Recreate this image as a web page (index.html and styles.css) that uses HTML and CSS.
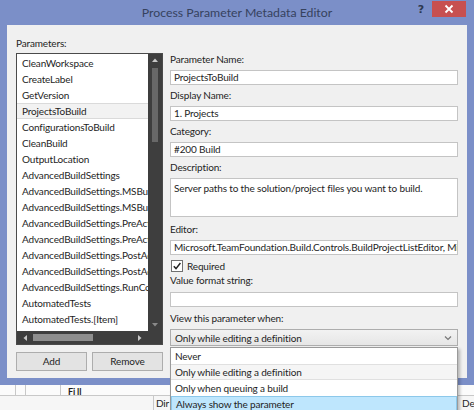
FILE: index.html
```html
<!DOCTYPE html>
<html>
<head>
<meta charset="utf-8">
<link rel="stylesheet" href="styles.css">
</head>
<body>
<div class="dialog">
  <div class="titlebar">
    <div></div>
    <div class="title">Process Parameter Metadata Editor</div>
    <div class="caption-buttons">
      <span class="help">?</span>
      <span class="close"><svg width="10" height="10" viewBox="0 0 10 10"><path d="M1.5 1.5L8.5 8.5M8.5 1.5L1.5 8.5" stroke="#fff" stroke-width="1.8"/></svg></span>
    </div>
  </div>
  <div class="client">
    <div class="left">
      <div class="label">Parameters:</div>
      <div class="listbox">
        <div class="list-main">
          <div class="items">
            <div class="item">CleanWorkspace</div>
            <div class="item">CreateLabel</div>
            <div class="item">GetVersion</div>
            <div class="item selected">ProjectsToBuild</div>
            <div class="item">ConfigurationsToBuild</div>
            <div class="item">CleanBuild</div>
            <div class="item">OutputLocation</div>
            <div class="item">AdvancedBuildSettings</div>
            <div class="item">AdvancedBuildSettings.MSBuildArguments</div>
            <div class="item">AdvancedBuildSettings.MSBuildPlatform</div>
            <div class="item">AdvancedBuildSettings.PreActionScriptPath</div>
            <div class="item">AdvancedBuildSettings.PreActionScriptArguments</div>
            <div class="item">AdvancedBuildSettings.PostActionScriptPath</div>
            <div class="item">AdvancedBuildSettings.PostActionScriptArguments</div>
            <div class="item">AdvancedBuildSettings.RunCodeAnalysis</div>
            <div class="item">AutomatedTests</div>
            <div class="item">AutomatedTests.[Item]</div>
          </div>
          <div class="vscroll">
            <svg class="arrow" width="14" height="12" viewBox="0 0 14 12"><path d="M4 8L7 4.5L10 8Z" fill="#c8c8c8"/></svg>
            <div class="vthumb"></div>
            <div class="vspace"></div>
            <svg class="arrow" width="14" height="12" viewBox="0 0 14 12"><path d="M4 4L7 7.5L10 4Z" fill="#8a8a8a"/></svg>
          </div>
        </div>
        <div class="hrow">
          <div class="hscroll">
            <svg width="12" height="12" viewBox="0 0 12 12"><path d="M8 3L4.5 6L8 9Z" fill="#c8c8c8"/></svg>
            <div class="hthumb"></div>
            <div class="hspace"></div>
            <svg width="12" height="12" viewBox="0 0 12 12"><path d="M4 3L7.5 6L4 9Z" fill="#c8c8c8"/></svg>
          </div>
          <div class="corner"></div>
        </div>
      </div>
      <div class="buttons">
        <div class="btn">Add</div>
        <div class="btn">Remove</div>
      </div>
    </div>
    <div class="right">
      <div class="label">Parameter Name:</div>
      <div class="box">ProjectsToBuild</div>
      <div class="label">Display Name:</div>
      <div class="box">1. Projects</div>
      <div class="label">Category:</div>
      <div class="box">#200 Build</div>
      <div class="label">Description:</div>
      <div class="box area">Server paths to the solution/project files you want to build.</div>
      <div class="label after-area">Editor:</div>
      <div class="box">Microsoft.TeamFoundation.Build.Controls.BuildProjectListEditor, Microsoft.TeamFoundation.Build.Controls</div>
      <div class="check-row">
        <span class="checkbox"><svg width="10" height="10" viewBox="0 0 10 10"><path d="M1.8 5.2L4 7.6L8.4 2" stroke="#222" stroke-width="1.5" fill="none"/></svg></span>
        <span>Required</span>
      </div>
      <div class="label">Value format string:</div>
      <div class="box fmt"></div>
      <div class="label">View this parameter when:</div>
      <div class="combo">
        <span>Only while editing a definition</span>
        <svg width="8" height="6" viewBox="0 0 8 6"><path d="M1 1.5L4 4.5L7 1.5" stroke="#777" stroke-width="1.2" fill="none"/></svg>
      </div>
    </div>
  </div>
</div>
<div class="backdrop">
  <div class="band1">
    <span class="vline l1"></span><span class="vline l2"></span><span class="vline l3"></span>
    <span class="fi">Fi ll</span>
  </div>
  <div class="band2">
    <span class="dir">Dir</span>
    <span class="de">De</span>
  </div>
</div>
<div class="dropdown">
  <div class="opt">Never</div>
  <div class="opt hover">Only while editing a definition</div>
  <div class="opt">Only when queuing a build</div>
  <div class="opt sel">Always show the parameter</div>
</div>
</body>
</html>
```
FILE: styles.css
```css
* { box-sizing: border-box; }
html, body { margin: 0; padding: 0; }
body {
  width: 474px;
  height: 410px;
  overflow: hidden;
  background: #f4f4f4;
  font-family: "Lato", "Open Sans", sans-serif;
  font-size: 10px;
  letter-spacing: -0.15px;
  color: #1e1e1e;
  position: relative;
}
.dialog {
  background: #7b8fc8;
  padding: 0 7px 7px 7px;
}
.titlebar {
  height: 25px;
  display: grid;
  grid-template-columns: 1fr auto 1fr;
  align-items: start;
}
.title {
  font-size: 12.3px;
  letter-spacing: 0;
  color: #36425e;
  line-height: 26px;
}
.caption-buttons {
  display: flex;
  justify-content: flex-end;
  align-items: flex-start;
  margin-right: 1px;
}
.help {
  font-weight: bold;
  color: #2d3850;
  font-size: 11px;
  line-height: 20px;
  margin-right: 8px;
  font-family: "DejaVu Sans", sans-serif;
}
.close {
  width: 34px;
  height: 16px;
  margin-top: 1px;
  background: #c75050;
  display: flex;
  align-items: center;
  justify-content: center;
}
.client {
  background: #f0f0f0;
  height: 353px;
  display: flex;
  padding: 11px 9px 0 9px;
  gap: 7px;
}
.left {
  width: 147px;
  display: flex;
  flex-direction: column;
}
.label {
  line-height: 15px;
  height: 15px;
  white-space: nowrap;
}
.left .label { margin-bottom: 2px; }
.listbox {
  height: 292px;
  border: 1px solid #4a4a4a;
  background: #fff;
  display: flex;
  flex-direction: column;
}
.list-main {
  flex: 1;
  display: flex;
  min-height: 0;
}
.items {
  flex: 1;
  overflow: hidden;
  padding-top: 1px;
}
.item {
  height: 16px;
  line-height: 16px;
  padding-left: 5px;
  white-space: nowrap;
}
.item.selected {
  background: #f2f2f2;
  border-top: 1px solid #dadada;
  border-bottom: 1px solid #dadada;
  line-height: 14px;
}
.vscroll {
  width: 14px;
  background: #3e3e3e;
  display: flex;
  flex-direction: column;
  align-items: center;
}
.arrow { display: block; flex: none; }
.vthumb {
  width: 6px;
  height: 74px;
  margin-top: 2px;
  background: #686868;
}
.vspace { flex: 1; }
.hrow {
  height: 13px;
  display: flex;
}
.hscroll {
  flex: 1;
  background: #3e3e3e;
  display: flex;
  align-items: center;
  padding: 0 2px;
}
.hthumb {
  width: 60px;
  height: 7px;
  margin-left: 2px;
  background: #8e8e8e;
}
.hspace { flex: 1; }
.corner {
  width: 14px;
  background: #3e3e3e;
}
.buttons {
  display: flex;
  gap: 5px;
  margin-top: 7px;
  width: 147px;
}
.btn {
  flex: 1;
  height: 19px;
  line-height: 17px;
  text-align: center;
  background: #e3e3e3;
  border: 1px solid #adadad;
}
.right {
  width: 288px;
  padding-top: 16px;
  display: flex;
  flex-direction: column;
}
.right .label { margin-bottom: 3px; }
.box {
  height: 15px;
  border: 1px solid #c4c4c4;
  background: #fff;
  line-height: 13px;
  padding-left: 3px;
  white-space: nowrap;
  overflow: hidden;
  margin-bottom: 3px;
}
.box.area {
  height: 39px;
  line-height: 16px;
  white-space: normal;
  padding-top: 1px;
  margin-bottom: 5px;
}
.check-row {
  height: 15px;
  display: flex;
  align-items: center;
  gap: 4px;
  padding-left: 1px;
  margin-bottom: 0;
}
.checkbox {
  width: 12px;
  height: 12px;
  border: 1px solid #707070;
  background: #fff;
  display: flex;
  align-items: center;
  justify-content: center;
}
.box.fmt { margin-top: 1px; margin-bottom: 4px; }
.combo {
  height: 17px;
  border: 1px solid #adadad;
  background: linear-gradient(#f2f2f2, #e6e6e6);
  display: flex;
  align-items: center;
  justify-content: space-between;
  padding: 0 5px 0 4px;
}
.backdrop {
  height: 25px;
  display: flex;
  flex-direction: column;
}
.band1 {
  height: 11px;
  background: #fbfbfb;
  border-bottom: 1px solid #c8c8c8;
  position: relative;
}
.vline {
  position: absolute;
  top: 0;
  bottom: 0;
  width: 1px;
  background: #c8c8c8;
}
.l1 { left: 15px; }
.l2 { left: 25px; }
.l3 { left: 60px; }
.fi {
  position: absolute;
  left: 68px;
  top: 2px;
  font-weight: bold;
  font-size: 9px;
  line-height: 9px;
}
.band2 {
  flex: 1;
  background: #f6f6f6;
  position: relative;
}
.dir {
  position: absolute;
  left: 153px;
  top: 0;
  padding-left: 2px;
  border-left: 1px solid #c8c8c8;
  line-height: 14px;
}
.de {
  position: absolute;
  left: 462px;
  top: 0;
  line-height: 14px;
}
.dropdown {
  position: absolute;
  left: 170px;
  top: 347px;
  width: 288px;
  background: #fff;
  border: 1px solid #9a9a9a;
  border-bottom: none;
  box-shadow: 2px 2px 3px rgba(0,0,0,0.25);
}
.opt {
  height: 16px;
  line-height: 16px;
  padding-left: 4px;
  white-space: nowrap;
}
.opt.hover {
  background: #f5f5f5;
  border-top: 1px solid #e0e0e0;
  border-bottom: 1px solid #e0e0e0;
  line-height: 14px;
}
.opt.sel {
  background: #bee6fd;
  border: 1px solid #8cc8ea;
  line-height: 14px;
}
```
